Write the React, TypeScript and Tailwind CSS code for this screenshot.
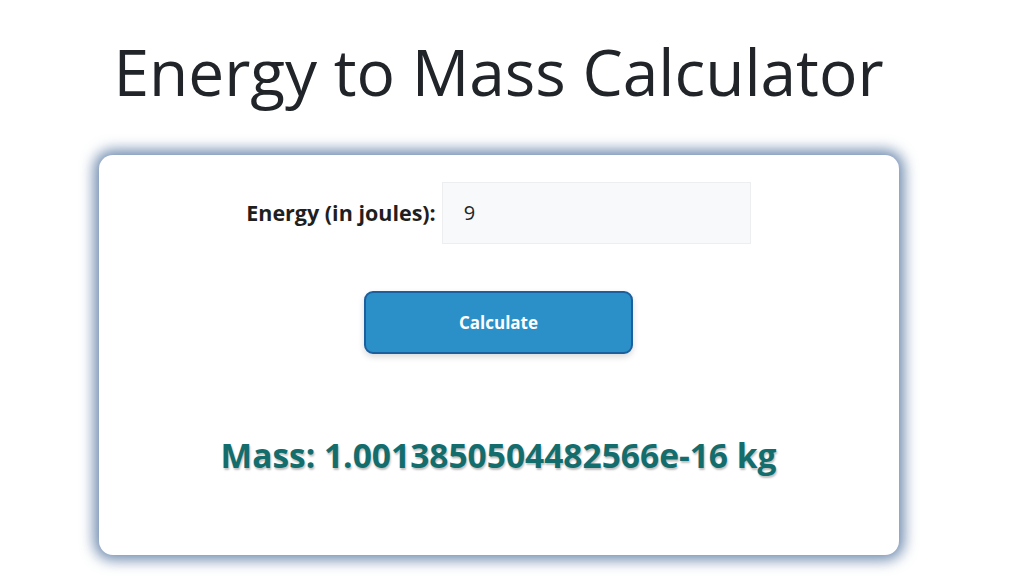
export default function App() {
  return (
    <div className="min-h-[584px] bg-white">
      <div className="w-[997px] flex flex-col items-center font-['Open_Sans',sans-serif]">
        <h1 className="mt-[34px] text-[64px] leading-[76px] text-[#212529] font-normal">Energy to Mass Calculator</h1>
        <div className="mt-[45px] w-[800px] h-[400px] bg-white rounded-[14px] shadow-[0_0_14px_5px_rgba(75,110,155,0.8)] flex flex-col items-center">
          <div className="mt-[27px] flex items-center gap-[6px]">
            <label className="text-[21.5px] font-bold text-[#1f1f1f]">Energy (in joules):</label>
            <div className="w-[309px] h-[62px] bg-[#f8f9fa] border border-[#eceef0] flex items-center pl-[21px] text-[20px] text-[#212529]">9</div>
          </div>
          <button className="mt-[47px] w-[269px] h-[63px] rounded-[9px] bg-[#2b90c8] border-2 border-[#1c5f9e] text-white font-bold text-[17px] shadow-[0_3px_6px_rgba(0,0,0,0.15)]">Calculate</button>
          <div className="mt-[76px] text-[33.5px] font-bold text-[#136d6d] [text-shadow:1px_2px_2px_rgba(0,0,0,0.25)]">Mass: 1.0013850504482566e-16 kg</div>
        </div>
      </div>
    </div>
  );
}
